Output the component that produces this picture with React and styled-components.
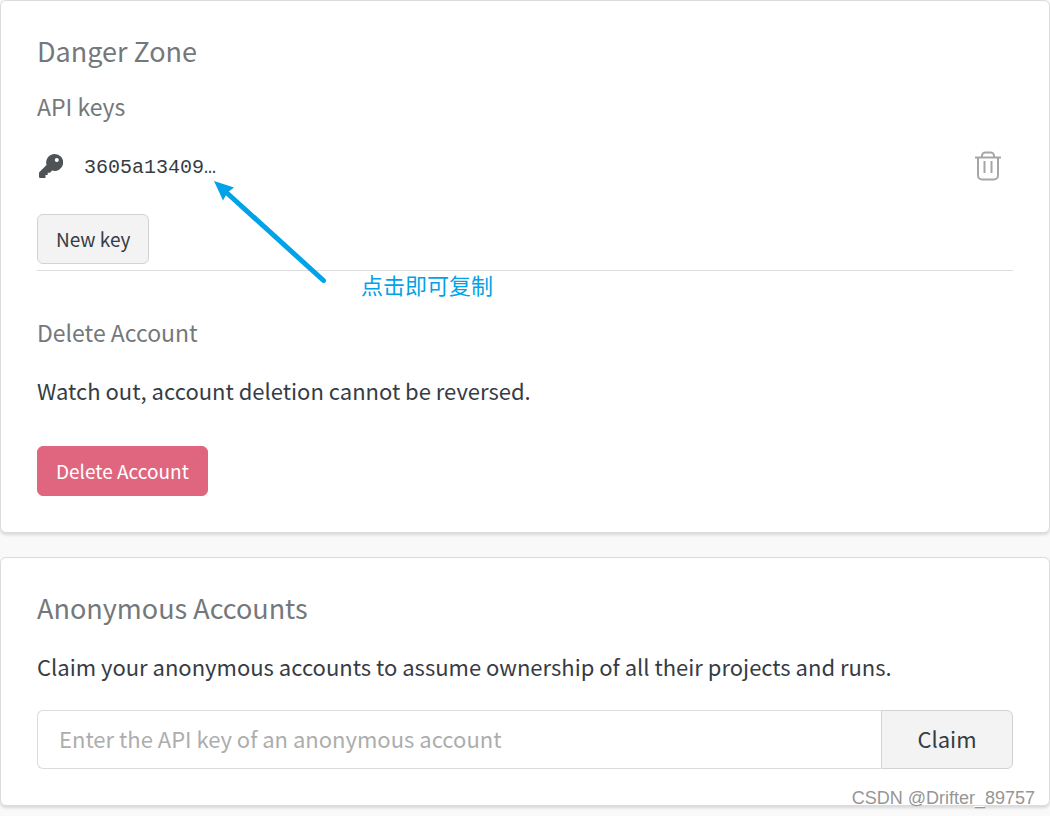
import { useState } from "react";
import styled, { createGlobalStyle } from "styled-components";


const GlobalStyle=createGlobalStyle`
    *{
        box-sizing: border-box;
    }
    body{
        margin: 0;
        background: #f9f9f9;
        color: #363c44;
        font-family: "Noto Sans CJK SC", "Noto Sans", sans-serif;
        font-size: 22px;
    }
`
const Page=styled.main`
    position: relative;
    display: flex;
    flex-direction: column;
    gap: 24px;
    padding-bottom: 10px;
`
const Card=styled.section`
    position: relative;
    padding: 36px;
    background: #fff;
    border: 1px solid #dcdcdd;
    border-radius: 6px;
    box-shadow: 0 2px 3px rgba(34, 36, 38, .15);
`
const Title=styled.h2`
    margin: 0;
    color: #75787b;
    font-size: 27px;
    font-weight: 400;
    line-height: 28px;
`
const SubTitle=styled.h3`
    margin: 0;
    color: #75787b;
    font-size: 23px;
    font-weight: 400;
    line-height: 28px;
`
const KeyHeading=styled(SubTitle)`
    margin-top: 27px;
`
const Text=styled.p`
    margin: 30px 0 0;
    line-height: 28px;
`
const KeyRow=styled.div`
    display: flex;
    align-items: center;
    height: 88px;
    margin: 2px 0 4px;
    padding-right: 11px;
`
const KeyIcon=styled.svg`
    width: 26px;
    height: 26px;
    margin-right: 21px;
`
const KeyValue=styled.button`
    padding: 4px 0 0;
    border: 0;
    background: none;
    color: #363c44;
    font-family: "Liberation Mono", monospace;
    font-size: 20px;
    line-height: 30px;
    cursor: pointer;
`
const TrashBtn=styled.button`
    display: flex;
    margin-left: auto;
    padding: 0;
    border: 0;
    background: none;
    cursor: pointer;
`
const Button=styled.button`
    display: block;
    height: 50px;
    padding: 0 18px;
    background: ${({$danger})=>$danger ? "#e0667f" : "#f3f3f3"};
    border: 1px solid ${({$danger})=>$danger ? "#e0667f" : "#d2d2d3"};
    border-radius: 6px;
    color: ${({$danger})=>$danger ? "#fff" : "#363c44"};
    font-family: inherit;
    font-size: 19px;
    line-height: 30px;
    cursor: pointer;
`
const Divider=styled.hr`
    margin: 6px 0 47px;
    border: 0;
    border-top: 1px solid #dcdcdd;
`
const DeleteBtn=styled(Button)`
    margin-top: 42px;
`
const ClaimForm=styled.form`
    display: flex;
    height: 59px;
    margin-top: 30px;
`
const ClaimInput=styled.input`
    flex: 1;
    min-width: 0;
    padding: 0 21px 3px;
    border: 1px solid #dcdcdd;
    border-right: 0;
    border-radius: 6px 0 0 6px;
    background: #fff;
    color: #363c44;
    font-family: inherit;
    font-size: 22px;
    outline: 0;
    &::placeholder{
        color: #adadad;
        opacity: 1;
    }
`
const ClaimBtn=styled(Button)`
    width: 132px;
    height: 59px;
    padding-bottom: 3px;
    border-radius: 0 6px 6px 0;
    font-size: 22px;
`
const Arrow=styled.svg`
    position: absolute;
    top: 176px;
    left: 208px;
    width: 124px;
    height: 112px;
    pointer-events: none;
`
const Note=styled.span`
    position: absolute;
    top: 267px;
    left: 360px;
    color: #00a2e8;
    font-size: 22px;
    line-height: 32px;
`
const Watermark=styled.span`
    position: absolute;
    right: 15px;
    bottom: 8px;
    color: #969696;
    font-family: "Liberation Sans", Arial, sans-serif;
    font-size: 18px;
    line-height: 20px;
    text-shadow: -1px -1px 0 #fff;
`

const App=()=>{
    const [apiKey,setApiKey]=useState("");

    return(
        <>
        <GlobalStyle/>
        <Page>
            <Card>
                <Title>Danger Zone</Title>
                <KeyHeading>API keys</KeyHeading>
                <KeyRow>
                    <KeyIcon viewBox="0 0 26 26" aria-hidden="true">
                        <path
                            fill="#4f5356"
                            fillRule="evenodd"
                            d="M17.5 1a8.5 8.5 0 1 1-2.4 16.600L13 19.800h-2.300V22H8.500v3H3.200A1.200 1.200 0 0 1 2 23.800v-3.600c0-.5.2-.9.5-1.200l7-7.100A8.500 8.500 0 0 1 17.500 1zm2.300 3.900a2 2 0 1 0 0 4 2 2 0 0 0 0-4z"
                        />
                    </KeyIcon>
                    <KeyValue type="button">3605a13409…</KeyValue>
                    <TrashBtn type="button" aria-label="Delete key">
                        <svg width="28" height="30" viewBox="0 0 28 30" fill="none" stroke="#a6a6a6" strokeWidth="2">
                            <path d="M1 6.500h26M4 6.500v18a4 4 0 0 0 4 4h12a4 4 0 0 0 4-4v-18M8 6.500V4.800A3.300 3.300 0 0 1 11.300 1.500h5.400A3.300 3.300 0 0 1 20 4.800v1.700M10.500 10v12M17.500 10v12"/>
                        </svg>
                    </TrashBtn>
                </KeyRow>
                <Button type="button">New key</Button>
                <Divider/>
                <SubTitle>Delete Account</SubTitle>
                <Text>Watch out, account deletion cannot be reversed.</Text>
                <DeleteBtn type="button" $danger>Delete Account</DeleteBtn>
                <Arrow viewBox="0 0 124 112" aria-hidden="true">
                    <path d="M114.500 103.500 18 16" stroke="#00a2e8" strokeWidth="5" strokeLinecap="round"/>
                    <path d="M5 4l20 6.500-6.500 5-4.500 8z" fill="#00a2e8"/>
                </Arrow>
                <Note>点击即可复制</Note>
            </Card>
            <Card>
                <Title>Anonymous Accounts</Title>
                <Text>Claim your anonymous accounts to assume ownership of all their projects and runs.</Text>
                <ClaimForm onSubmit={(e)=>e.preventDefault()}>
                    <ClaimInput
                        aria-label="API key"
                        placeholder="Enter the API key of an anonymous account"
                        value={apiKey}
                        onChange={(e)=>setApiKey(e.target.value)}
                    />
                    <ClaimBtn type="submit">Claim</ClaimBtn>
                </ClaimForm>
            </Card>
            <Watermark>CSDN @Drifter_89757</Watermark>
        </Page>
        </>
    )
}

export default App
